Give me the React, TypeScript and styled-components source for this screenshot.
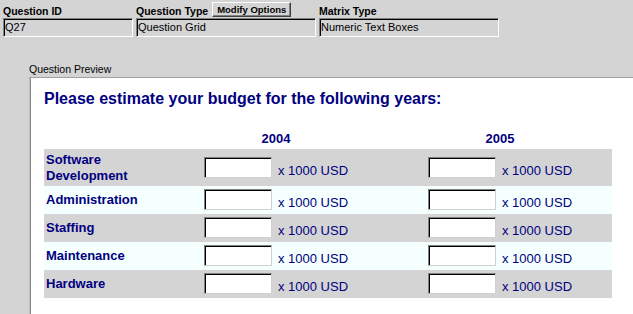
import React from "react";
import styled, { createGlobalStyle } from "styled-components";

const GlobalStyle = createGlobalStyle`
  html, body {
    margin: 0;
    padding: 0;
    background: #d4d4d4;
    overflow: hidden;
  }
  body {
    font-family: "Liberation Sans", Arial, sans-serif;
    min-height: 314px;
  }
`;

const Page = styled.div`
  width: 633px;
  height: 314px;
  overflow: hidden;
`;

const TopBar = styled.div`
  display: flex;
  gap: 3px;
  padding-left: 3px;
`;

const Field = styled.div<{ $w: number }>`
  display: flex;
  flex-direction: column;
  width: ${(p) => p.$w}px;
`;

const LabelRow = styled.div`
  display: flex;
  align-items: flex-end;
  height: 18px;
  padding-bottom: 1px;
  box-sizing: border-box;
`;

const FieldLabel = styled.span`
  font-size: 10.5px;
  font-weight: bold;
  line-height: 12px;
  color: #000;
`;

const SmallButton = styled.button`
  margin-left: 4px;
  height: 15px;
  padding: 0 4px;
  background: #d4d4d4;
  border: 1px solid;
  border-color: #fff #404040 #404040 #fff;
  box-shadow: inset -1px -1px 0 #808080;
  font-family: "Liberation Sans", Arial, sans-serif;
  font-size: 9.5px;
  font-weight: bold;
  line-height: 11px;
  color: #000;
  cursor: pointer;
`;

const ReadBox = styled.div`
  height: 19px;
  box-sizing: border-box;
  border: 1px solid;
  border-color: #808080 #fff #fff #808080;
  box-shadow: inset 1px 1px 0 #000;
  background: #d4d4d4;
  font-size: 11px;
  line-height: 17px;
  padding-left: 1px;
  color: #000;
`;

const Preview = styled.div`
  margin-top: 26px;
  padding-left: 29px;
`;

const PreviewLabel = styled.div`
  font-size: 10.5px;
  line-height: 13px;
  color: #000;
`;

const Panel = styled.div`
  margin-top: 1px;
  width: 640px;
  height: 260px;
  background: #fff;
  border-top: 1px solid #a0a0a0;
  border-left: 1px solid #bdbdbd;
  box-shadow: inset 1px 0 0 #8a8a8a;
  padding: 12px 0 0 14px;
  box-sizing: border-box;
`;

const Heading = styled.h1`
  margin: 0;
  font-size: 16px;
  line-height: 18px;
  font-weight: bold;
  color: #000080;
`;

const Grid = styled.div`
  margin-top: 23px;
  width: 568px;
  display: grid;
  grid-template-columns: 120px 224px 224px;
`;

const YearHead = styled.div`
  text-align: center;
  font-size: 13px;
  font-weight: bold;
  line-height: 15px;
  color: #000080;
  padding-bottom: 3px;
`;

const Cell = styled.div<{ $alt: boolean }>`
  background: ${(p) => (p.$alt ? "#f4fffe" : "#d4d4d4")};
  min-height: 28px;
  padding: 1.5px 0 1px;
  box-sizing: border-box;
  display: flex;
  align-items: center;
`;

const RowLabel = styled(Cell)`
  padding-left: 2px;
  padding-top: 2.5px;
  font-size: 13px;
  font-weight: bold;
  line-height: 16.5px;
  color: #000080;
`;

const AmountCell = styled(Cell)`
  justify-content: center;
  gap: 6px;
`;

const AmountInput = styled.input`
  width: 68px;
  height: 21px;
  box-sizing: border-box;
  margin: 0;
  padding: 0 2px;
  background: #fff;
  border: 1px solid;
  border-color: #808080 #d0d0d0 #d0d0d0 #808080;
  box-shadow: inset 1px 1px 0 #000;
  font-family: "Liberation Sans", Arial, sans-serif;
  font-size: 12px;
  outline: none;
`;

const Unit = styled.span`
  font-size: 13px;
  line-height: 15px;
  padding-top: 5px;
  color: #000080;
`;

const rows = ["Software Development", "Administration", "Staffing", "Maintenance", "Hardware"];

export default function App() {
  return (
    <Page>
      <GlobalStyle />
      <TopBar>
        <Field $w={130}>
          <LabelRow>
            <FieldLabel>Question ID</FieldLabel>
          </LabelRow>
          <ReadBox>Q27</ReadBox>
        </Field>
        <Field $w={180}>
          <LabelRow>
            <FieldLabel>Question Type</FieldLabel>
            <SmallButton type="button">Modify Options</SmallButton>
          </LabelRow>
          <ReadBox>Question Grid</ReadBox>
        </Field>
        <Field $w={180}>
          <LabelRow>
            <FieldLabel>Matrix Type</FieldLabel>
          </LabelRow>
          <ReadBox>Numeric Text Boxes</ReadBox>
        </Field>
      </TopBar>
      <Preview>
        <PreviewLabel>Question Preview</PreviewLabel>
        <Panel>
          <Heading>Please estimate your budget for the following years:</Heading>
          <Grid>
            <div />
            <YearHead>2004</YearHead>
            <YearHead>2005</YearHead>
            {rows.map((r, i) => (
              <React.Fragment key={r}>
                <RowLabel $alt={i % 2 === 1}>{r}</RowLabel>
                <AmountCell $alt={i % 2 === 1}>
                  <AmountInput type="text" />
                  <Unit>x 1000 USD</Unit>
                </AmountCell>
                <AmountCell $alt={i % 2 === 1}>
                  <AmountInput type="text" />
                  <Unit>x 1000 USD</Unit>
                </AmountCell>
              </React.Fragment>
            ))}
          </Grid>
        </Panel>
      </Preview>
    </Page>
  );
}
